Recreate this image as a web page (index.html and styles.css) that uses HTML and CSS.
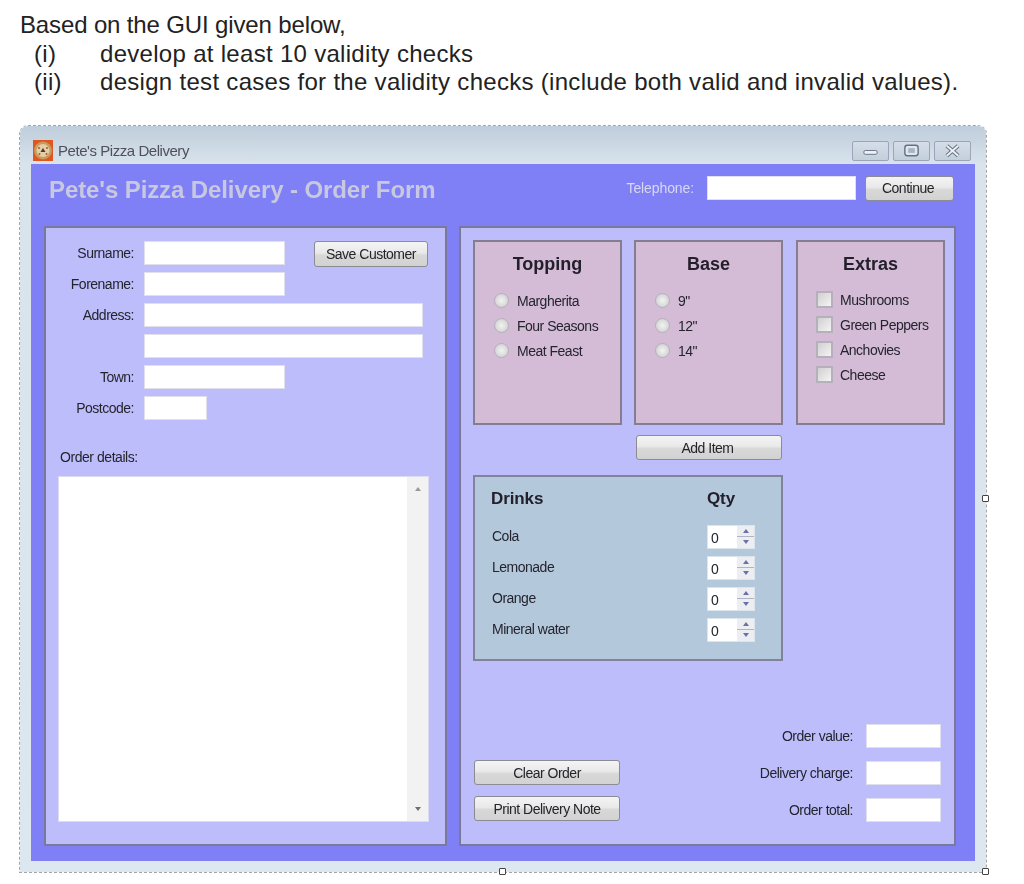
FILE: index.html
```html
<!DOCTYPE html>
<html lang="en">
<head>
<meta charset="utf-8">
<title>Pete's Pizza Delivery</title>
<link rel="stylesheet" href="styles.css">
</head>
<body>
<div class="brief">
  <p>Based on the GUI given below,</p>
  <ol class="brief-list">
    <li><span class="num">(i)</span><span>develop at least 10 validity checks</span></li>
    <li><span class="num">(ii)</span><span>design test cases for the validity checks (include both valid and invalid values).</span></li>
  </ol>
</div>
<div class="canvas">
  <div class="window">
    <div class="titlebar">
      <svg class="app-icon" viewBox="0 0 20 21"><rect width="20" height="21" fill="#e0561f"/><circle cx="10" cy="10.5" r="9" fill="#c99a62"/><circle cx="10" cy="10.5" r="6.5" fill="#e3cfa6"/><circle cx="6" cy="8" r="1" fill="#a85a2a"/><circle cx="14" cy="8" r="1" fill="#a85a2a"/><circle cx="6.5" cy="14" r="1" fill="#a85a2a"/><circle cx="13.5" cy="14" r="1" fill="#a85a2a"/><path d="M7.5 12 L10 8 L12.5 12 Z" fill="#4a3a32"/></svg>
      <span class="win-title">Pete's Pizza Delivery</span>
      <div class="win-buttons">
        <span class="win-btn"><svg viewBox="0 0 36 19"><rect x="11" y="9" width="14" height="4" rx="1.5" fill="#eef2f6" stroke="#66707e"/></svg></span>
        <span class="win-btn"><svg viewBox="0 0 36 19"><rect x="11" y="3.5" width="14" height="11" rx="2.5" fill="#dfe6ee" stroke="#66707e" stroke-width="1.5"/><rect x="14.5" y="6.5" width="7" height="5" fill="#a9b4c2"/></svg></span>
        <span class="win-btn"><svg viewBox="0 0 36 19"><path d="M12 4 L24 14.5 M24 4 L12 14.5" stroke="#66707e" stroke-width="4"/><path d="M12 4 L24 14.5 M24 4 L12 14.5" stroke="#eef2f6" stroke-width="2"/></svg></span>
      </div>
    </div>
    <div class="client">
      <div class="client-head">
        <h1 class="form-title">Pete's Pizza Delivery - Order Form</h1>
        <label class="tel-label">Telephone:</label>
        <input class="field tel-field" type="text">
        <button class="btn continue-btn">Continue</button>
      </div>
      <div class="panels">
        <section class="panel panel-left">
          <div class="customer">
            <label class="lbl">Surname:</label><input class="field" type="text"><button class="btn save-btn">Save Customer</button>
            <label class="lbl">Forename:</label><input class="field" type="text">
            <label class="lbl">Address:</label><input class="field wide" type="text">
            <input class="field wide" type="text">
            <label class="lbl">Town:</label><input class="field" type="text">
            <label class="lbl">Postcode:</label><input class="field short" type="text">
          </div>
          <div class="order-label">Order details:</div>
          <div class="order-box">
            <div class="scrollbar"><span class="arrow-up"></span><span class="arrow-down"></span></div>
          </div>
        </section>
        <section class="panel panel-right">
          <div class="groups">
            <div class="group">
              <h2>Topping</h2>
              <div class="opt-list">
                <div class="opt"><span class="radio"></span>Margherita</div>
                <div class="opt"><span class="radio"></span>Four Seasons</div>
                <div class="opt"><span class="radio"></span>Meat Feast</div>
              </div>
            </div>
            <div class="group">
              <h2>Base</h2>
              <div class="opt-list">
                <div class="opt"><span class="radio"></span>9"</div>
                <div class="opt"><span class="radio"></span>12"</div>
                <div class="opt"><span class="radio"></span>14"</div>
              </div>
            </div>
            <div class="group group-extras">
              <h2>Extras</h2>
              <div class="opt-list check-list">
                <div class="opt"><span class="check"></span>Mushrooms</div>
                <div class="opt"><span class="check"></span>Green Peppers</div>
                <div class="opt"><span class="check"></span>Anchovies</div>
                <div class="opt"><span class="check"></span>Cheese</div>
              </div>
            </div>
          </div>
          <button class="btn add-btn">Add Item</button>
          <div class="drinks">
            <div class="drink-row drink-head"><span>Drinks</span><span>Qty</span></div>
            <div class="drink-row"><span>Cola</span><div class="spinner">0<span class="spin"><i class="up"></i><i class="down"></i></span></div></div>
            <div class="drink-row"><span>Lemonade</span><div class="spinner">0<span class="spin"><i class="up"></i><i class="down"></i></span></div></div>
            <div class="drink-row"><span>Orange</span><div class="spinner">0<span class="spin"><i class="up"></i><i class="down"></i></span></div></div>
            <div class="drink-row"><span>Mineral water</span><div class="spinner">0<span class="spin"><i class="up"></i><i class="down"></i></span></div></div>
          </div>
          <div class="bottom">
            <div class="actions">
              <button class="btn action-btn">Clear Order</button>
              <button class="btn action-btn">Print Delivery Note</button>
            </div>
            <div class="totals">
              <label class="lbl">Order value:</label><input class="field" type="text">
              <label class="lbl">Delivery charge:</label><input class="field" type="text">
              <label class="lbl">Order total:</label><input class="field" type="text">
            </div>
          </div>
        </section>
      </div>
    </div>
    <span class="handle handle-right"></span>
    <span class="handle handle-bottom"></span>
    <span class="handle handle-corner"></span>
  </div>
</div>
</body>
</html>
```
FILE: styles.css
```css
* { box-sizing: border-box; }
html, body { margin: 0; padding: 0; }
body {
  width: 1024px;
  height: 884px;
  overflow: hidden;
  background: #fff;
  font-family: "Liberation Sans", Arial, sans-serif;
  color: #1c1c1c;
}
.brief {
  height: 126px;
  padding: 11px 0 0 20px;
  font-size: 24px;
  line-height: 28.5px;
  color: #222;
}
.brief p { margin: 0; letter-spacing: -0.14px; }
.brief-list { margin: 0; padding: 0 0 0 14px; list-style: none; letter-spacing: 0.3px; }
.brief-list li { display: flex; }
.num { width: 66px; }

.canvas { padding-left: 20px; }
.window {
  position: relative;
  width: 966px;
  height: 746px;
  padding: 0 11px;
  border-radius: 8px 8px 0 0;
  background: linear-gradient(#bfcddb 0, #d8e3ec 38px, #dce7f0 100%);
  outline: 1px dashed #a5a5a5;
  filter: blur(0.5px);
  font-size: 14px;
  letter-spacing: -0.5px;
  color: #24242f;
}
.titlebar {
  display: flex;
  align-items: center;
  height: 38px;
  padding: 11px 4px 0 2px;
}
.app-icon { width: 20px; height: 21px; flex: none; }
.win-title { margin-left: 5px; font-size: 15px; color: #50505a; letter-spacing: -0.45px; }
.win-buttons { display: flex; gap: 4px; margin-left: auto; }
.win-btn {
  width: 37px;
  height: 20px;
  border: 1px solid #9aa6b8;
  border-radius: 2px;
  background: linear-gradient(#d5dee8, #c3cfdc);
}
.win-btn svg { display: block; width: 100%; height: 100%; }

.client { height: 697px; background: #7f7ff6; }
.client-head {
  display: flex;
  align-items: center;
  height: 62px;
  padding: 0 21px 14px 18px;
}
.form-title {
  margin: 4px 0 0;
  font-size: 24px;
  font-weight: bold;
  letter-spacing: -0.1px;
  color: #c8c8e0;
}
.tel-label { margin-left: auto; margin-right: 13px; color: #d8d8f4; letter-spacing: -0.1px; }
.field {
  display: block;
  width: 141px;
  height: 24px;
  margin: 0;
  padding: 0;
  border: 1px solid #e0e0ec;
  background: #fff;
  outline: none;
}
.field.tel-field { width: 149px; }
.btn {
  padding: 0;
  border: 1px solid #8b8b94;
  border-radius: 3px;
  background: linear-gradient(#f4f4f4 0, #e9e9e9 45%, #d8d8d8 55%, #d2d2d2 100%);
  font-family: inherit;
  font-size: 14px;
  letter-spacing: -0.5px;
  color: #24242a;
}
.continue-btn { width: 89px; height: 25px; margin-left: 9px; padding-right: 3px; }

.panels { display: flex; gap: 12px; padding: 0 13px; }
.panel {
  height: 620px;
  border: 2px solid #7a7a98;
  background: #bdbdfb;
}
.panel-left { width: 403px; padding: 13px 0 0 12px; }
.panel-right {
  display: flex;
  flex-direction: column;
  align-items: flex-start;
  width: 497px;
  padding: 12px 0 22px 12px;
}
.customer {
  display: grid;
  grid-template-columns: 76px 141px auto;
  grid-auto-rows: 31px;
  column-gap: 10px;
  align-items: start;
}
.lbl { line-height: 24px; text-align: right; white-space: nowrap; }
.customer .lbl { grid-column: 1; justify-self: end; }
.customer .field { grid-column: 2; }
.customer .field.wide { width: 279px; grid-column: 2 / 4; }
.customer .field.short { width: 63px; }
.save-btn { width: 114px; height: 26px; margin-left: 19px; grid-column: 3; grid-row: 1; justify-self: start; }
.order-label { margin: 22px 0 11px 2px; height: 16px; line-height: 16px; letter-spacing: -0.45px; }
.order-box {
  display: flex;
  justify-content: flex-end;
  width: 371px;
  height: 346px;
  background: #fff;
  border: 1px solid #dcdcf0;
}
.scrollbar {
  display: flex;
  flex-direction: column;
  justify-content: space-between;
  align-items: center;
  width: 21px;
  height: 100%;
  padding: 10px 0;
  background: #f2f2f2;
}
.arrow-up { border: 3px solid transparent; border-top: 0; border-bottom: 4px solid #9a9a9a; }
.arrow-down { border: 3px solid transparent; border-bottom: 0; border-top: 4px solid #6f6f6f; }

.groups { display: flex; gap: 12px; }
.group {
  width: 149px;
  height: 185px;
  border: 2px solid #857d92;
  background: #d4bcd6;
}
.group-extras { margin-left: 1px; }
.group h2 {
  margin: 11px 0 0;
  height: 22px;
  line-height: 22px;
  font-size: 18px;
  font-weight: bold;
  text-align: center;
  letter-spacing: 0;
  color: #23202c;
}
.opt-list { margin-top: 13px; padding-left: 19px; }
.opt { display: flex; align-items: center; gap: 9px; height: 25px; white-space: nowrap; }
.radio {
  width: 15px;
  height: 15px;
  margin-right: -1px;
  border: 1px solid #b4b0bc;
  border-radius: 50%;
  background: radial-gradient(circle at 50% 50%, #f2f2f2 0, #dcdcdc 55%, #c4c4c4 100%);
}
.check-list { margin-top: 12px; padding-left: 18px; }
.check-list .opt { gap: 7px; }
.check {
  width: 17px;
  height: 17px;
  border: 2px solid #b5b0bc;
  background: linear-gradient(135deg, #d0d0d0, #f4f4f4);
}
.add-btn { width: 146px; height: 25px; margin: 10px 0 0 163px; padding-right: 3px; }

.drinks {
  width: 310px;
  height: 186px;
  margin-top: 15px;
  padding: 6px 26px 0 16px;
  border: 2px solid #80839a;
  background: #b4c8dc;
}
.drink-row {
  display: flex;
  justify-content: space-between;
  align-items: center;
  height: 31px;
}
.drink-row > span:first-child { width: 215px; margin-bottom: 2px; padding-left: 1px; }
.drink-row .spinner { margin-left: auto; }
.drink-head {
  height: 32px;
  margin-bottom: 6px;
  font-size: 17px;
  font-weight: bold;
  letter-spacing: -0.1px;
  color: #23202c;
}
.drink-row.drink-head > span:first-child { margin-bottom: 0; padding-left: 0; }
.drink-head > span:last-child { width: 48px; }
.spinner {
  display: flex;
  justify-content: space-between;
  width: 48px;
  height: 24px;
  padding-left: 3px;
  line-height: 24px;
  background: #fff;
  border: 1px solid #dce4ec;
}
.spin {
  display: flex;
  flex-direction: column;
  width: 17px;
  background: #eceef2;
}
.spin i { display: flex; flex: 1; align-items: center; justify-content: center; border-bottom: 1px solid #b0b4be; }
.spin .up::before { content: ""; border: 3px solid transparent; border-top: 0; border-bottom: 4px solid #6a70a8; }
.spin .down { border-bottom: 0; }
.spin .down::before { content: ""; border: 3px solid transparent; border-bottom: 0; border-top: 4px solid #6a70a8; }

.bottom {
  display: flex;
  justify-content: space-between;
  align-items: flex-end;
  width: 468px;
  margin-top: auto;
}
.actions { display: flex; flex-direction: column; gap: 11px; margin: 0 0 1px 1px; }
.action-btn { width: 146px; height: 25px; }
.totals {
  display: grid;
  grid-template-columns: auto 75px;
  grid-auto-rows: 24px;
  column-gap: 13px;
  row-gap: 13px;
  justify-items: end;
}
.totals .field { width: 75px; }

.handle {
  position: absolute;
  width: 7px;
  height: 7px;
  background: #fff;
  border: 1px solid #444;
  border-radius: 1px;
}
.handle-right { top: 369px; right: -3px; }
.handle-bottom { bottom: -3px; left: 479px; }
.handle-corner { bottom: -3px; right: -3px; }
```
